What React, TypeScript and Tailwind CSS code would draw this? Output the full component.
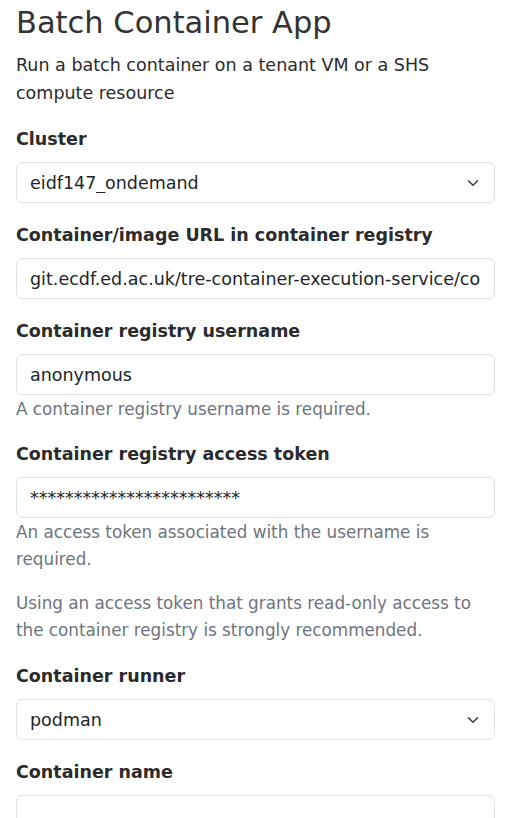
import { ChangeEvent } from 'react'

const font = { fontFamily: '"DejaVu Sans", sans-serif' }

function Chevron() {
  return (
    <svg
      className="absolute right-[14px] top-1/2 -translate-y-1/2"
      width="16"
      height="12"
      viewBox="0 0 16 16"
      fill="none"
      stroke="#343a40"
      strokeWidth="2"
      strokeLinecap="round"
      strokeLinejoin="round"
    >
      <path d="M2 5l6 6 6-6" />
    </svg>
  )
}

interface FieldProps {
  label: string
  value: string
  select?: boolean
  help?: string
}

function Field({ label, value, select, help }: FieldProps) {
  const noop = (_: ChangeEvent<HTMLInputElement>) => {}
  return (
    <div className="mb-[17px]">
      <label className="block pt-[1px] mb-[9px] text-[17.5px] leading-[28px] font-bold text-[#2b2b2b]">
        {label}
      </label>
      <div className="relative">
        <input
          readOnly
          value={value}
          onChange={noop}
          style={font}
          className={`block w-full h-[41px] border border-[#dee2e6] rounded-[6px] bg-white pl-[13px] ${
            select ? 'pr-[40px]' : 'pr-[13px]'
          } text-[17.5px] leading-[26px] text-[#212529] outline-none`}
        />
        {select && <Chevron />}
      </div>
      {help && (
        <p className="pt-[1px] -mb-[1px] text-[16.8px] leading-[27px] text-[#6c757d]">{help}</p>
      )}
    </div>
  )
}

export default function App() {
  return (
    <div style={font} className="bg-white min-h-[818px] px-4 pt-[5px] text-[#212529]">
      <h1 className="text-[30.5px] leading-[36.6px] font-normal mb-[9px] text-[#333333]">
        Batch Container App
      </h1>
      <p className="text-[17.5px] leading-[28px] mb-[17.5px] text-[#2b2b2b]">
        Run a batch container on a tenant VM or a SHS compute resource
      </p>

      <Field label="Cluster" value="eidf147_ondemand" select />
      <Field
        label="Container/image URL in container registry"
        value="git.ecdf.ed.ac.uk/tre-container-execution-service/containers/example"
      />
      <Field
        label="Container registry username"
        value="anonymous"
        help="A container registry username is required."
      />
      <Field
        label="Container registry access token"
        value="************************"
        help="An access token associated with the username is required."
      />
      <p className="pt-[1px] text-[16.8px] leading-[27px] text-[#6c757d] mb-[17px]">
        Using an access token that grants read-only access to the container registry is
        strongly recommended.
      </p>
      <Field label="Container runner" value="podman" select />
      <Field label="Container name" value="" />
    </div>
  )
}
